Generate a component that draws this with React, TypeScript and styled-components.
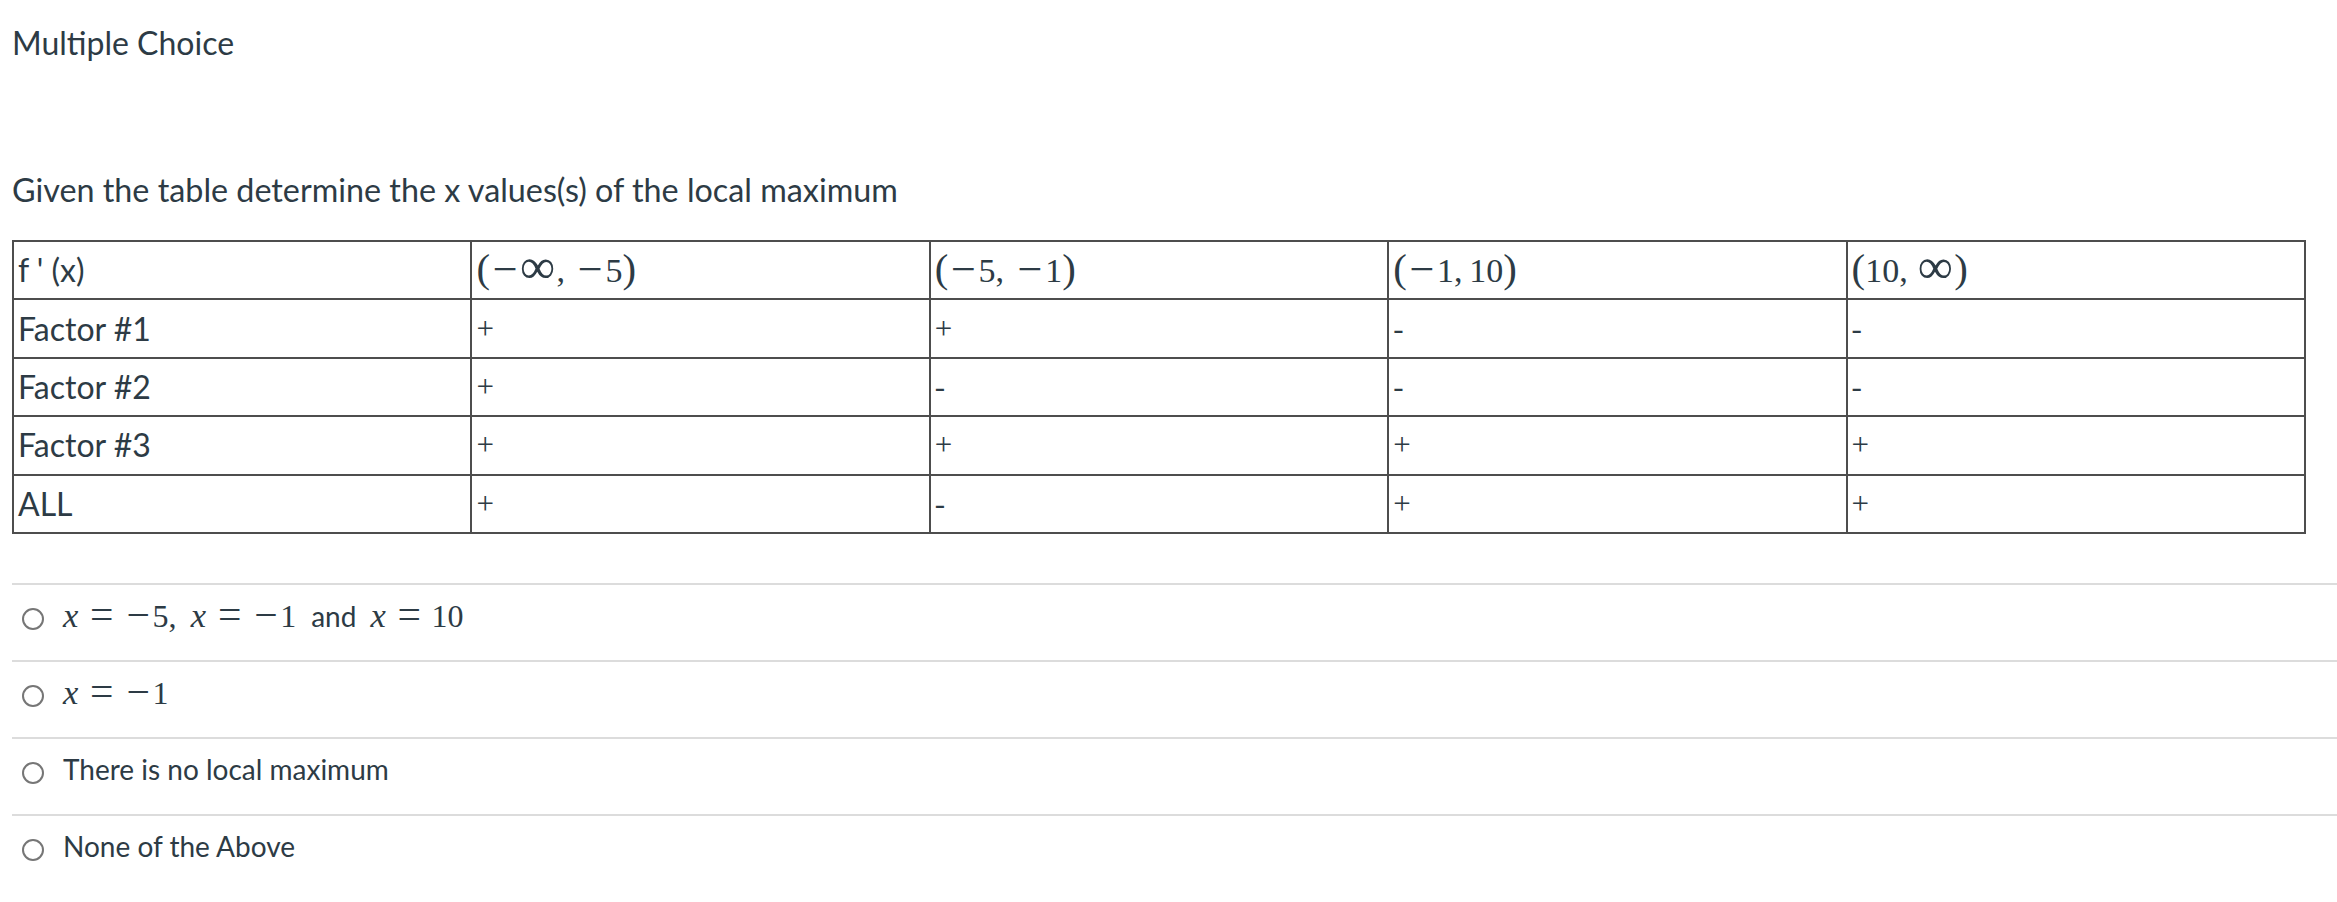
import React from "react";
import styled, { createGlobalStyle } from "styled-components";

const GlobalStyle = createGlobalStyle`
  html, body { margin: 0; padding: 0; background: #ffffff; }
  body { font-family: Lato, "Noto Sans", sans-serif; color: #2d3b45; }
`;

const Page = styled.div`
  padding: 24px 0 0 12px;
`;

const Title = styled.h2`
  margin: 0;
  font-size: 32px;
  line-height: 38px;
  font-weight: 400;
  color: #2d3b45;
`;

const Question = styled.p`
  margin: 109px 0 0 0;
  font-size: 32.3px;
  line-height: 38px;
  color: #2d3b45;
`;

const Table = styled.table`
  margin-top: 31px;
  border-collapse: collapse;
  table-layout: fixed;
  width: 2294px;
`;

const Row = styled.tr`
  height: 58.4px;
`;

const Cell = styled.td<{ $sign?: boolean }>`
  border: 2px solid #4d4d4d;
  padding: 0 4px;
  vertical-align: middle;
  font-family: ${(p) => (p.$sign ? '"Liberation Serif", serif' : 'Lato, "Noto Sans", sans-serif')};
  font-size: ${(p) => (p.$sign ? "31px" : "32px")};
  line-height: 36px;
  color: #2d3b45;
  white-space: nowrap;
`;

const Math = styled.span<{ $size: number }>`
  font-family: "Liberation Serif", "DejaVu Serif", serif;
  font-size: ${(p) => p.$size}px;
  color: #2d3b45;
  white-space: nowrap;
`;

/* a glyph of the math set at its own scale, kept on the text baseline */
const Glyph = styled.span<{ $s: number; $v?: number; $ml?: number; $mr?: number }>`
  display: inline-block;
  font-size: ${(p) => p.$s}em;
  line-height: 0;
  vertical-align: ${(p) => p.$v ?? 0}em;
  margin-left: ${(p) => p.$ml ?? 0}em;
  margin-right: ${(p) => p.$mr ?? 0}em;
`;

const MI = styled.i`
  font-style: italic;
  font-size: 1.08em;
  margin-right: 0.04em;
`;

const Punct = styled.span<{ $gap?: number }>`
  margin-right: ${(p) => p.$gap ?? 0.2}em;
`;

const Options = styled.div`
  margin-top: 49px;
`;

const Option = styled.label`
  display: flex;
  align-items: flex-start;
  box-sizing: border-box;
  height: 77px;
  padding: 14px 0 0 10px;
  border-top: 2px solid #dcdcdc;
  font-size: 28px;
  line-height: 32px;
  color: #2d3b45;
`;

const Radio = styled.span`
  flex: none;
  box-sizing: border-box;
  width: 22px;
  height: 22px;
  margin-top: 9px;
  margin-right: 19px;
  border: 2px solid #767676;
  border-radius: 50%;
  background: #fff;
`;

const TextWord = styled.span`
  margin: 0 14px 0 15px;
  font-family: Lato, "Noto Sans", sans-serif;
  font-size: 28px;
`;

const OptionText = styled.span`
  white-space: nowrap;
`;

const Paren = ({ c }: { c: string }) => <Glyph $s={1.2}>{c}</Glyph>;
const Minus = ({ tight }: { tight?: boolean }) => (
  <Glyph $s={1.3} $v={-0.06} $ml={0.06} $mr={tight ? 0.02 : 0.06}>
    −
  </Glyph>
);
const Infinity_ = () => (
  <Glyph $s={1.45} $v={-0.03} $ml={0.03} $mr={0.03}>
    ∞
  </Glyph>
);
const Eq = () => (
  <Glyph $s={1.3} $v={-0.03} $ml={0.25} $mr={0.25}>
    =
  </Glyph>
);

type Sign = "+" | "-";
const rows: { label: string; signs: Sign[] }[] = [
  { label: "Factor #1", signs: ["+", "+", "-", "-"] },
  { label: "Factor #2", signs: ["+", "-", "-", "-"] },
  { label: "Factor #3", signs: ["+", "+", "+", "+"] },
  { label: "ALL", signs: ["+", "-", "+", "+"] },
];

const H = 34;

export default function App() {
  return (
    <>
      <GlobalStyle />
      <Page>
        <Title>Multiple Choice</Title>
        <Question>Given the table determine the x values(s) of the local maximum</Question>
        <Table>
          <tbody>
            <Row>
              <Cell>f ' (x)</Cell>
              <Cell>
                <Math $size={H}>
                  <Paren c="(" />
                  <Minus tight />
                  <Infinity_ />
                  <Punct $gap={0.3}>,</Punct>
                  <Minus />5
                  <Paren c=")" />
                </Math>
              </Cell>
              <Cell>
                <Math $size={H}>
                  <Paren c="(" />
                  <Minus />5<Punct $gap={0.32}>,</Punct>
                  <Minus />1
                  <Paren c=")" />
                </Math>
              </Cell>
              <Cell>
                <Math $size={H}>
                  <Paren c="(" />
                  <Minus />1<Punct $gap={0.2}>,</Punct>10
                  <Paren c=")" />
                </Math>
              </Cell>
              <Cell>
                <Math $size={H}>
                  <Paren c="(" />10<Punct $gap={0.25}>,</Punct>
                  <Infinity_ />
                  <Paren c=")" />
                </Math>
              </Cell>
            </Row>
            {rows.map((r) => (
              <Row key={r.label}>
                <Cell>{r.label}</Cell>
                {r.signs.map((s, i) => (
                  <Cell key={i} $sign>
                    {s}
                  </Cell>
                ))}
              </Row>
            ))}
          </tbody>
        </Table>
        <Options>
          <Option>
            <Radio />
            <OptionText>
              <Math $size={32}>
                <MI>x</MI>
                <Eq />
                <Minus />5<Punct $gap={0.45}>,</Punct>
                <MI>x</MI>
                <Eq />
                <Minus />1
              </Math>
              <TextWord>and</TextWord>
              <Math $size={32}>
                <MI>x</MI>
                <Eq />
                10
              </Math>
            </OptionText>
          </Option>
          <Option>
            <Radio />
            <OptionText>
              <Math $size={32}>
                <MI>x</MI>
                <Eq />
                <Minus />1
              </Math>
            </OptionText>
          </Option>
          <Option>
            <Radio />
            <OptionText>There is no local maximum</OptionText>
          </Option>
          <Option>
            <Radio />
            <OptionText>None of the Above</OptionText>
          </Option>
        </Options>
      </Page>
    </>
  );
}
